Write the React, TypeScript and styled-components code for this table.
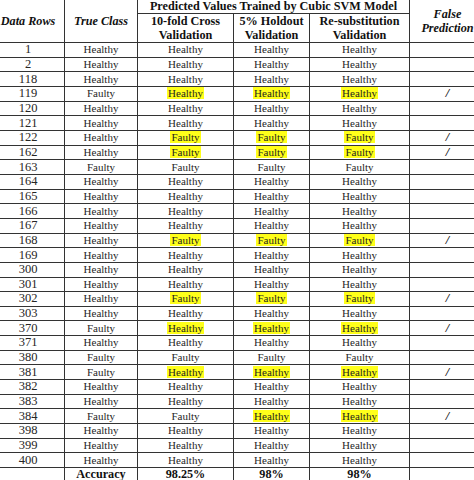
import React from 'react';
import styled, { createGlobalStyle } from 'styled-components';

const GlobalStyle = createGlobalStyle`
  html, body {
    margin: 0;
    padding: 0;
    background: #ffffff;
    overflow: hidden;
  }
`;

const Page = styled.div`
  width: 474px;
  height: 480px;
  overflow: hidden;
  background: #ffffff;
`;

const Table = styled.table`
  margin: -2px 0 0 -9px;
  border-collapse: collapse;
  table-layout: fixed;
  width: 494px;
  font-family: 'Liberation Serif', 'Times New Roman', serif;
  color: #262626;
`;

const HeadCell = styled.th<{ $italic?: boolean }>`
  border: 1px solid #333;
  padding: 0;
  font-size: 12.2px;
  font-weight: bold;
  font-style: ${(p) => (p.$italic ? 'italic' : 'normal')};
  line-height: 14px;
  color: #111;
  text-align: center;
  vertical-align: middle;
  white-space: nowrap;
  overflow: hidden;
`;

const TopRow = styled.tr`
  height: 14px;
`;

const SubRow = styled.tr`
  height: 28px;
`;

const BodyRow = styled.tr`
  height: 14.67px;
`;

const Cell = styled.td<{ $num?: boolean; $bold?: boolean }>`
  border: 1px solid #333;
  padding: 0;
  font-size: ${(p) => (p.$num ? '12.5px' : p.$bold ? '12.2px' : '11px')};
  font-weight: ${(p) => (p.$bold ? 'bold' : 'normal')};
  color: ${(p) => (p.$bold ? '#111' : '#262626')};
  line-height: 13px;
  text-align: center;
  vertical-align: middle;
  white-space: nowrap;
`;

const Mark = styled.span`
  background: #ffff1a;
  color: #1e1e1e;
  padding: 0 1px;
`;

const Slash = styled.span`
  font-weight: bold;
  font-style: italic;
  font-size: 12.5px;
  color: #111;
`;

type Row = {
  id: number;
  truth: string;
  pred: [string, string, string];
};

const rows: Row[] = [
  { id: 1, truth: 'Healthy', pred: ['Healthy', 'Healthy', 'Healthy'] },
  { id: 2, truth: 'Healthy', pred: ['Healthy', 'Healthy', 'Healthy'] },
  { id: 118, truth: 'Healthy', pred: ['Healthy', 'Healthy', 'Healthy'] },
  { id: 119, truth: 'Faulty', pred: ['Healthy', 'Healthy', 'Healthy'] },
  { id: 120, truth: 'Healthy', pred: ['Healthy', 'Healthy', 'Healthy'] },
  { id: 121, truth: 'Healthy', pred: ['Healthy', 'Healthy', 'Healthy'] },
  { id: 122, truth: 'Healthy', pred: ['Faulty', 'Faulty', 'Faulty'] },
  { id: 162, truth: 'Healthy', pred: ['Faulty', 'Faulty', 'Faulty'] },
  { id: 163, truth: 'Faulty', pred: ['Faulty', 'Faulty', 'Faulty'] },
  { id: 164, truth: 'Healthy', pred: ['Healthy', 'Healthy', 'Healthy'] },
  { id: 165, truth: 'Healthy', pred: ['Healthy', 'Healthy', 'Healthy'] },
  { id: 166, truth: 'Healthy', pred: ['Healthy', 'Healthy', 'Healthy'] },
  { id: 167, truth: 'Healthy', pred: ['Healthy', 'Healthy', 'Healthy'] },
  { id: 168, truth: 'Healthy', pred: ['Faulty', 'Faulty', 'Faulty'] },
  { id: 169, truth: 'Healthy', pred: ['Healthy', 'Healthy', 'Healthy'] },
  { id: 300, truth: 'Healthy', pred: ['Healthy', 'Healthy', 'Healthy'] },
  { id: 301, truth: 'Healthy', pred: ['Healthy', 'Healthy', 'Healthy'] },
  { id: 302, truth: 'Healthy', pred: ['Faulty', 'Faulty', 'Faulty'] },
  { id: 303, truth: 'Healthy', pred: ['Healthy', 'Healthy', 'Healthy'] },
  { id: 370, truth: 'Faulty', pred: ['Healthy', 'Healthy', 'Healthy'] },
  { id: 371, truth: 'Healthy', pred: ['Healthy', 'Healthy', 'Healthy'] },
  { id: 380, truth: 'Faulty', pred: ['Faulty', 'Faulty', 'Faulty'] },
  { id: 381, truth: 'Faulty', pred: ['Healthy', 'Healthy', 'Healthy'] },
  { id: 382, truth: 'Healthy', pred: ['Healthy', 'Healthy', 'Healthy'] },
  { id: 383, truth: 'Healthy', pred: ['Healthy', 'Healthy', 'Healthy'] },
  { id: 384, truth: 'Faulty', pred: ['Faulty', 'Healthy', 'Healthy'] },
  { id: 398, truth: 'Healthy', pred: ['Healthy', 'Healthy', 'Healthy'] },
  { id: 399, truth: 'Healthy', pred: ['Healthy', 'Healthy', 'Healthy'] },
  { id: 400, truth: 'Healthy', pred: ['Healthy', 'Healthy', 'Healthy'] },
];

const widths = [73, 73, 96, 76, 100, 76];

export default function App() {
  return (
    <Page>
      <GlobalStyle />
      <Table>
        <colgroup>
          {widths.map((w, i) => (
            <col key={i} style={{ width: w }} />
          ))}
        </colgroup>
        <thead>
          <TopRow>
            <HeadCell rowSpan={2} $italic>
              Data Rows
            </HeadCell>
            <HeadCell rowSpan={2} $italic>
              True Class
            </HeadCell>
            <HeadCell colSpan={3}>Predicted Values Trained by Cubic SVM Model</HeadCell>
            <HeadCell rowSpan={2} $italic>
              False
              <br />
              Prediction
            </HeadCell>
          </TopRow>
          <SubRow>
            <HeadCell>
              10-fold Cross
              <br />
              Validation
            </HeadCell>
            <HeadCell>
              5% Holdout
              <br />
              Validation
            </HeadCell>
            <HeadCell>
              Re-substitution
              <br />
              Validation
            </HeadCell>
          </SubRow>
        </thead>
        <tbody>
          {rows.map((r) => {
            const wrong = r.pred.some((p) => p !== r.truth);
            return (
              <BodyRow key={r.id}>
                <Cell $num>{r.id}</Cell>
                <Cell>{r.truth}</Cell>
                {r.pred.map((p, i) => (
                  <Cell key={i}>{p !== r.truth ? <Mark>{p}</Mark> : p}</Cell>
                ))}
                <Cell>{wrong && <Slash>/</Slash>}</Cell>
              </BodyRow>
            );
          })}
          <BodyRow>
            <Cell />
            <Cell $bold>Accuracy</Cell>
            <Cell $bold>98.25%</Cell>
            <Cell $bold>98%</Cell>
            <Cell $bold>98%</Cell>
            <Cell />
          </BodyRow>
        </tbody>
      </Table>
    </Page>
  );
}
